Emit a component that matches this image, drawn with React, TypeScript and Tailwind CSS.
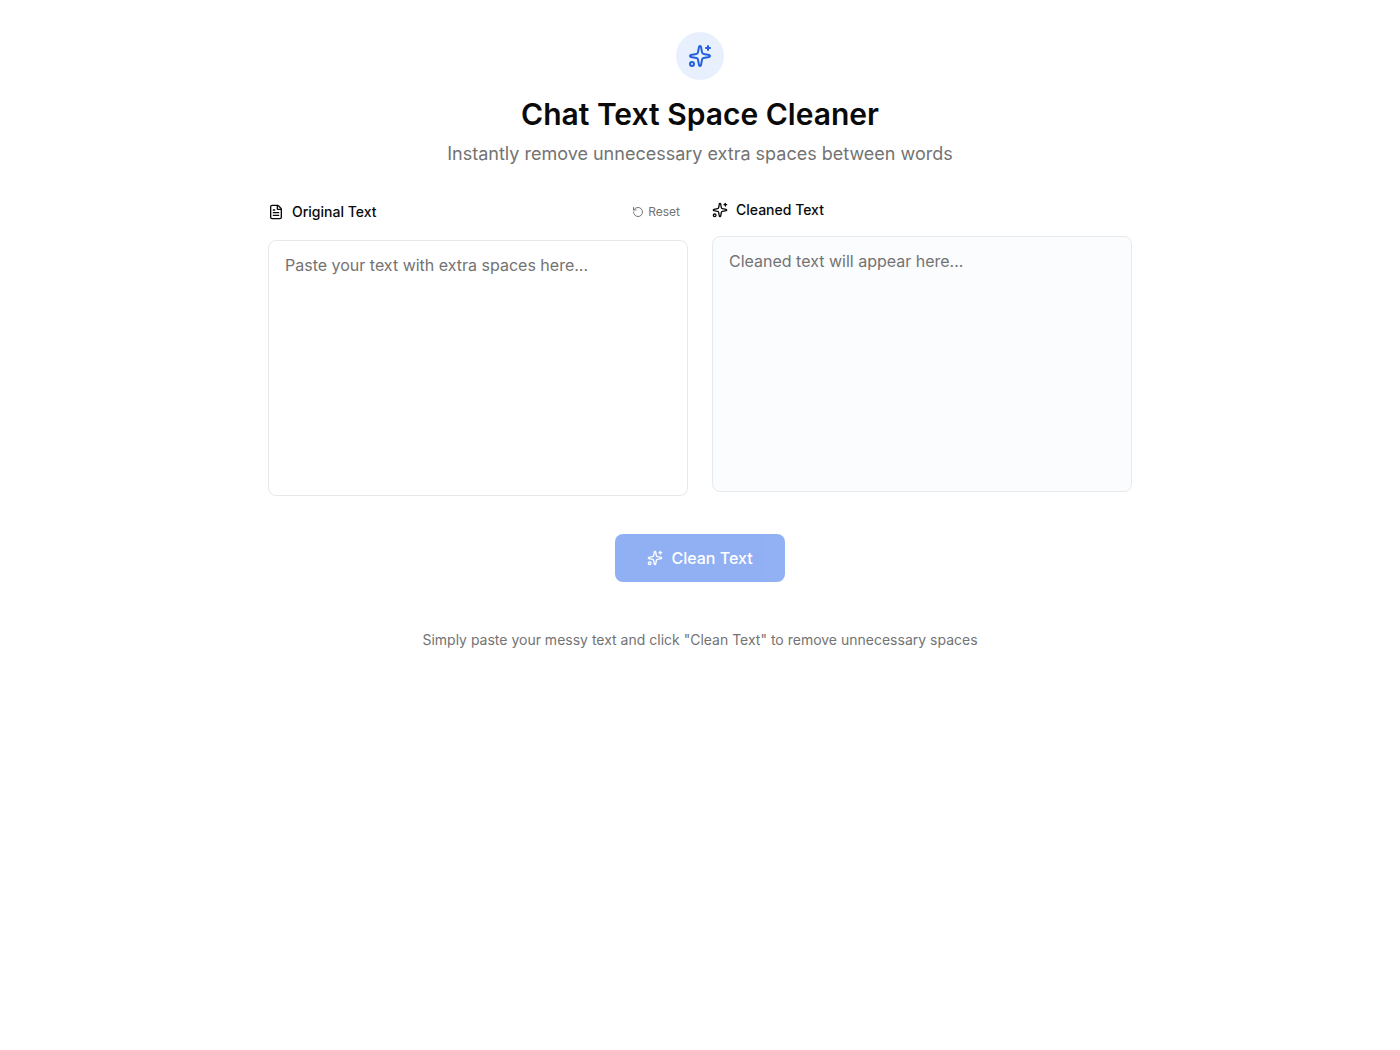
import React, { useState } from "react";
import { FileText, RotateCcw, Sparkles } from "lucide-react";

const textareaClass =
  "block h-64 w-full resize-none rounded-lg border border-[#e5e9eb] p-4 text-base leading-4 text-[#0a0a0a] outline-none placeholder:text-[#737373]";

const App = () => {
  const [input, setInput] = useState("");
  const [output, setOutput] = useState("");

  const cleanText = () => setOutput(input.replace(/\s+/g, " ").trim());

  const reset = () => {
    setInput("");
    setOutput("");
  };

  return (
    <div className="min-h-screen bg-white font-['Inter',sans-serif] text-[#0a0a0a]">
      <div className="mx-auto max-w-4xl px-4 py-8">
        <header className="mb-8 text-center">
          <div className="mx-auto mb-4 flex h-12 w-12 items-center justify-center rounded-full bg-[#e9f0fd]">
            <Sparkles className="h-6 w-6 text-[#2460dc]" />
          </div>
          <h1 className="mb-2 text-3xl font-semibold">Chat Text Space Cleaner</h1>
          <p className="text-lg text-[#737373]">
            Instantly remove unnecessary extra spaces between words
          </p>
        </header>

        <div className="grid grid-cols-2 gap-6">
          <div className="space-y-4">
            <div className="flex h-6 items-center justify-between">
              <label className="flex items-center gap-2 text-sm font-medium">
                <FileText className="h-4 w-4" />
                Original Text
              </label>
              <button onClick={reset} className="flex items-center gap-1 px-2 text-xs text-[#737373]">
                <RotateCcw className="h-3 w-3" />
                Reset
              </button>
            </div>
            <textarea
              value={input}
              onChange={(e) => setInput(e.target.value)}
              placeholder="Paste your text with extra spaces here..."
              className={textareaClass}
            />
          </div>
          <div className="space-y-4">
            <label className="flex items-center gap-2 text-sm font-medium">
              <Sparkles className="h-4 w-4" />
              Cleaned Text
            </label>
            <textarea
              value={output}
              readOnly
              placeholder="Cleaned text will appear here..."
              className={`${textareaClass} bg-[#fbfcfd]`}
            />
          </div>
        </div>

        <div className="mt-[38px] flex justify-center">
          <button
            onClick={cleanText}
            disabled={!input}
            className="flex h-12 items-center gap-2 rounded-lg bg-[#2563eb] px-8 text-base font-medium text-white disabled:opacity-50"
          >
            <Sparkles className="h-4 w-4" />
            Clean Text
          </button>
        </div>

        <p className="mt-12 text-center text-sm text-[#737373]">
          Simply paste your messy text and click "Clean Text" to remove unnecessary spaces
        </p>
      </div>
    </div>
  );
};

export default App;
